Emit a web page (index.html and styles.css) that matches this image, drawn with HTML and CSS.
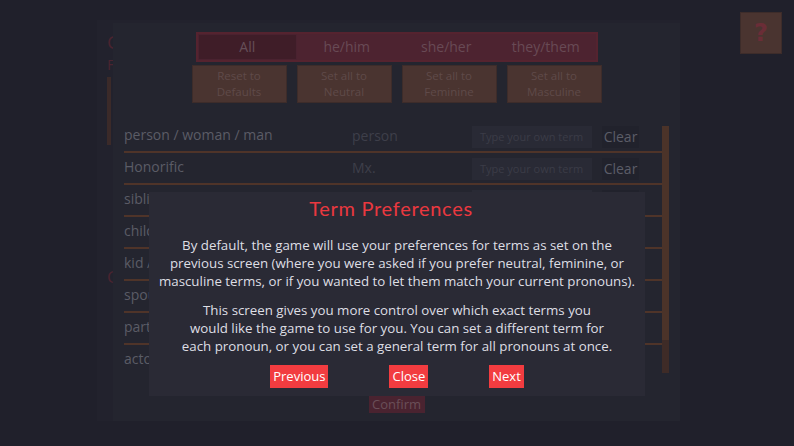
FILE: index.html
```html
<!DOCTYPE html>
<html lang="en">
<head>
<meta charset="utf-8">
<title>Term Preferences</title>
<link rel="stylesheet" href="styles.css">
</head>
<body>
<div class="screen">
  <div class="frame">
    <aside class="side">
      <span class="side-c">C</span>
      <span class="side-f">F</span>
      <span class="side-bar"></span>
      <span class="side-c2">C</span>
    </aside>
    <main class="panel">
      <div class="tabs">
        <div class="tab active">All</div>
        <div class="tab">he/him</div>
        <div class="tab">she/her</div>
        <div class="tab">they/them</div>
      </div>
      <div class="actions">
        <div class="act">Reset to<br>Defaults</div>
        <div class="act">Set all to<br>Neutral</div>
        <div class="act">Set all to<br>Feminine</div>
        <div class="act">Set all to<br>Masculine</div>
      </div>
      <div class="list">
        <div class="rows">
          <div class="row"><div class="label">person / woman / man</div><div class="value">person</div><div class="input">Type your own term</div><div class="clear">Clear</div></div>
          <div class="row"><div class="label">Honorific</div><div class="value">Mx.</div><div class="input">Type your own term</div><div class="clear">Clear</div></div>
          <div class="row"><div class="label">sibling / sister / brother</div><div class="value">sibling</div><div class="input">Type your own term</div><div class="clear">Clear</div></div>
          <div class="row"><div class="label">child / daughter / son</div><div class="value">child</div><div class="input">Type your own term</div><div class="clear">Clear</div></div>
          <div class="row"><div class="label">kid / girl / boy</div><div class="value">kid</div><div class="input">Type your own term</div><div class="clear">Clear</div></div>
          <div class="row"><div class="label">spouse / wife / husband</div><div class="value">spouse</div><div class="input">Type your own term</div><div class="clear">Clear</div></div>
          <div class="row"><div class="label">partner / girlfriend / boyfriend</div><div class="value">partner</div><div class="input">Type your own term</div><div class="clear">Clear</div></div>
          <div class="row"><div class="label">actor / actress / actor</div><div class="value">actor</div><div class="input">Type your own term</div><div class="clear">Clear</div></div>
        </div>
        <div class="scroll"><div class="thumb"></div></div>
      </div>
      <div class="confirm">Confirm</div>
    </main>
  </div>
  <div class="help">?</div>
</div>

<div class="modal">
  <h1 class="modal-title">Term Preferences</h1>
  <p class="modal-p first">By default, the game will use your preferences for terms as set on the<br>previous screen (where you were asked if you prefer neutral, feminine, or<br>masculine terms, or if you wanted to let them match your current pronouns).</p>
  <p class="modal-p second">This screen gives you more control over which exact terms you<br>would like the game to use for you. You can set a different term for<br>each pronoun, or you can set a general term for all pronouns at once.</p>
  <div class="modal-btns">
    <div class="mbtn">Previous</div>
    <div class="mbtn">Close</div>
    <div class="mbtn">Next</div>
  </div>
</div>
</body>
</html>
```

FILE: styles.css
```css
* { box-sizing: border-box; }

html, body {
  margin: 0;
  padding: 0;
}

body {
  width: 794px;
  height: 446px;
  overflow: hidden;
  background: #20202b;
  font-family: "Open Sans", "DejaVu Sans", sans-serif;
  position: relative;
}

.screen {
  display: flex;
  align-items: flex-start;
  padding: 12px 0 0 97px;
  height: 446px;
}

.frame {
  width: 583px;
  height: 401px;
  margin-top: 8px;
  background: #22222d;
  display: flex;
}

.side {
  width: 16px;
  padding-left: 10px;
  overflow: hidden;
  display: flex;
  flex-direction: column;
  color: #4a2430;
  font-family: "Open Sans", sans-serif;
}

.side-c {
  margin-top: 10px;
  font-size: 19px;
  line-height: 24px;
}

.side-f {
  margin-top: 1px;
  font-size: 15px;
  line-height: 18px;
}

.side-bar {
  display: block;
  width: 4px;
  height: 68px;
  margin-top: 4px;
  background: #3b2a29;
}

.side-c2 {
  margin-top: 122px;
  font-size: 17px;
  line-height: 20px;
}

.panel {
  flex: 1;
  margin-top: 3px;
  background: #24252f;
  display: flex;
  flex-direction: column;
  align-items: center;
  padding-top: 9px;
}

.tabs {
  width: 402px;
  height: 30px;
  border: 2px solid #55232f;
  background: #4d2330;
  display: flex;
}

.tab {
  flex: 1;
  text-align: center;
  font-size: 14px;
  line-height: 26px;
  color: #684a55;
}

.tab.active {
  background: #3f1d28;
  box-shadow: inset 0 0 0 1px #4a2230;
  color: #654f58;
}

.actions {
  margin-top: 3px;
  display: flex;
  gap: 10px;
}

.act {
  width: 95px;
  height: 38px;
  background: #4a3430;
  border: 1px solid #3d2c2a;
  color: #5f4a49;
  font-size: 11.5px;
  line-height: 16px;
  text-align: center;
  display: flex;
  align-items: center;
  justify-content: center;
}

.list {
  margin-top: 18px;
  align-self: stretch;
  padding: 0 11px;
  height: 252px;
  display: flex;
  overflow: hidden;
}

.rows {
  flex: 1;
}

.row {
  height: 32px;
  border-bottom: 2px solid #4f3429;
  display: flex;
  align-items: flex-start;
  white-space: nowrap;
}

.label {
  width: 228px;
  padding-top: 4px;
  font-size: 14px;
  line-height: 20px;
  color: #5b5c66;
  overflow: hidden;
}

.value {
  width: 120px;
  padding-top: 5px;
  font-size: 14px;
  line-height: 20px;
  color: #3e3f4a;
}

.input {
  width: 120px;
  height: 22px;
  margin-top: 5px;
  background: #292a35;
  font-size: 11px;
  line-height: 22px;
  color: #3b3c47;
  padding-left: 8px;
}

.clear {
  margin-left: 10px;
  width: 37px;
  height: 22px;
  margin-top: 5px;
  background: #21222c;
  font-size: 14px;
  line-height: 22px;
  text-align: center;
  color: #5c5d68;
}

.scroll {
  width: 7px;
  height: 247px;
  margin-top: 5px;
  background: #3e2b27;
}

.thumb {
  height: 214px;
  background: #4b3329;
}

.confirm {
  margin-top: 22px;
  width: 56px;
  height: 18px;
  background: #4a2330;
  color: #6a4f58;
  font-size: 13px;
  line-height: 18px;
  text-align: center;
}

.help {
  width: 42px;
  height: 42px;
  margin-left: 60px;
  background: #4a3430;
  border: 1px solid #3d2c2a;
  color: #6a2d37;
  font-family: "DejaVu Sans", sans-serif;
  font-weight: bold;
  font-size: 24px;
  line-height: 40px;
  text-align: center;
}

.modal {
  position: absolute;
  left: 149px;
  top: 192px;
  width: 496px;
  height: 204px;
  background: #2a2a35;
  text-align: center;
  color: #dedee4;
  padding-top: 4px;
}

.modal-title {
  margin: 0;
  padding-right: 12px;
  font-family: "Lato", sans-serif;
  font-weight: normal;
  font-size: 20px;
  line-height: 24px;
  letter-spacing: 0.7px;
  color: #ea383f;
}

.modal-p {
  margin: 0;
  font-size: 13.3px;
  line-height: 18px;
  white-space: nowrap;
}

.modal-p.first { margin-top: 16px; }
.modal-p.second { margin-top: 11px; }

.modal-btns {
  margin-top: 10px;
  display: flex;
  justify-content: center;
  gap: 61px;
}

.mbtn {
  height: 23px;
  padding: 0 3px;
  background: #f23c40;
  color: #ffffff;
  font-size: 13px;
  line-height: 23px;
}
```
